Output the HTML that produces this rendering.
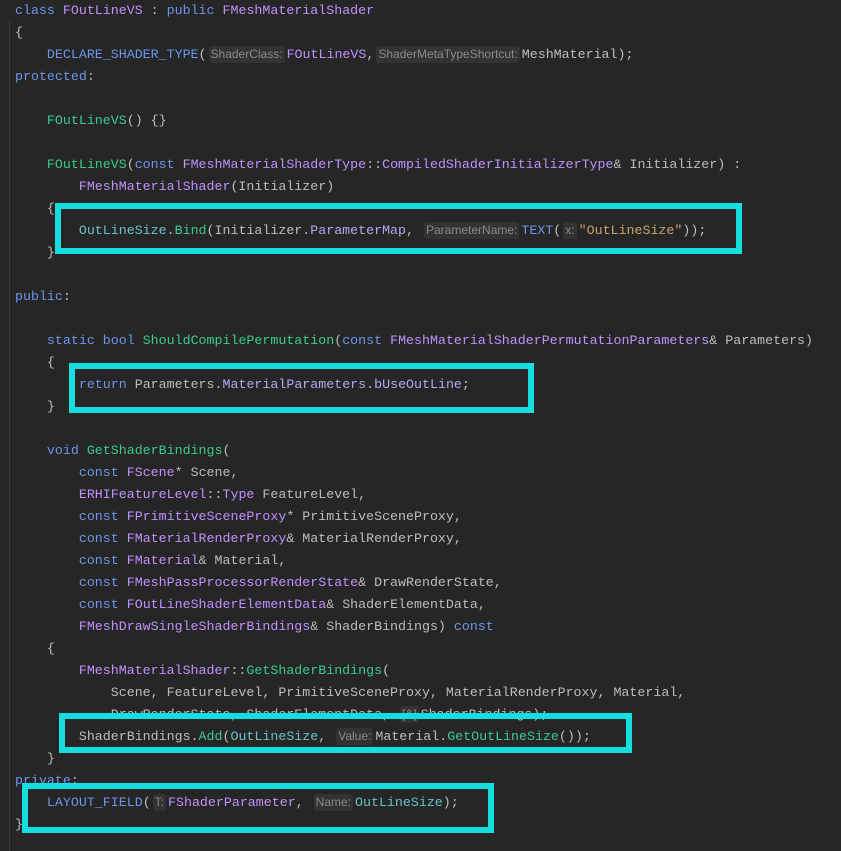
<!DOCTYPE html>
<html><head><meta charset="utf-8"><style>
html,body{margin:0;padding:0;background:#262626;width:841px;height:851px;overflow:hidden}
#code{position:absolute;left:15px;top:0px;font-family:"Liberation Mono",monospace;font-size:13.3px;line-height:22px;white-space:pre;color:#bdbdbd}
.k{color:#6c95eb}.c{color:#c191ff}.f{color:#39cc8f}.m{color:#66c3cc}.s{color:#c9a26d}.p{color:#b9a7f2}
.h{display:inline-block;font-family:"Liberation Sans",sans-serif;font-size:12px;line-height:17px;color:#8a8a8a;background:#333;border-radius:3px;padding:0 2px;margin:0 2px;vertical-align:0px}
.box{position:absolute;border:6px solid #17dede;box-sizing:border-box}
.g{position:absolute;left:9px;top:20px;width:1px;height:831px;background:#3a3a3a}
</style></head><body>
<div class="g"></div>
<div id="code"><span class="k">class</span> <span class="c">FOutLineVS</span> : <span class="k">public</span> <span class="c">FMeshMaterialShader</span>
{
    <span class="k">DECLARE_SHADER_TYPE</span>(<span class="h">ShaderClass:</span><span class="c">FOutLineVS</span>,<span class="h">ShaderMetaTypeShortcut:</span>MeshMaterial);
<span class="k">protected</span>:

    <span class="f">FOutLineVS</span>() {}

    <span class="f">FOutLineVS</span>(<span class="k">const</span> <span class="c">FMeshMaterialShaderType</span>::<span class="c">CompiledShaderInitializerType</span>&amp; Initializer) :
        <span class="c">FMeshMaterialShader</span>(Initializer)
    {
        <span class="m">OutLineSize</span>.<span class="f">Bind</span>(Initializer.<span class="p">ParameterMap</span>, <span class="h">ParameterName:</span><span class="k">TEXT</span>(<span class="h">x:</span><span class="s">"OutLineSize"</span>));
    }

<span class="k">public</span>:

    <span class="k">static</span> <span class="k">bool</span> <span class="f">ShouldCompilePermutation</span>(<span class="k">const</span> <span class="c">FMeshMaterialShaderPermutationParameters</span>&amp; Parameters)
    {
        <span class="k">return</span> Parameters.<span class="p">MaterialParameters</span>.<span class="p">bUseOutLine</span>;
    }

    <span class="k">void</span> <span class="f">GetShaderBindings</span>(
        <span class="k">const</span> <span class="c">FScene</span>* Scene,
        <span class="c">ERHIFeatureLevel</span>::<span class="c">Type</span> FeatureLevel,
        <span class="k">const</span> <span class="c">FPrimitiveSceneProxy</span>* PrimitiveSceneProxy,
        <span class="k">const</span> <span class="c">FMaterialRenderProxy</span>&amp; MaterialRenderProxy,
        <span class="k">const</span> <span class="c">FMaterial</span>&amp; Material,
        <span class="k">const</span> <span class="c">FMeshPassProcessorRenderState</span>&amp; DrawRenderState,
        <span class="k">const</span> <span class="c">FOutLineShaderElementData</span>&amp; ShaderElementData,
        <span class="c">FMeshDrawSingleShaderBindings</span>&amp; ShaderBindings) <span class="k">const</span>
    {
        <span class="c">FMeshMaterialShader</span>::<span class="f">GetShaderBindings</span>(
            Scene, FeatureLevel, PrimitiveSceneProxy, MaterialRenderProxy, Material,
            DrawRenderState, ShaderElementData, <span class="h">[&amp;]</span>ShaderBindings);
        ShaderBindings.<span class="f">Add</span>(<span class="m">OutLineSize</span>, <span class="h">Value:</span>Material.<span class="f">GetOutLineSize</span>());
    }
<span class="k">private</span>:
    <span class="k">LAYOUT_FIELD</span>(<span class="h">T:</span><span class="c">FShaderParameter</span>, <span class="h">Name:</span><span class="m">OutLineSize</span>);
}</div>
<div class="box" style="left:55px;top:203px;width:687px;height:51px"></div>
<div class="box" style="left:69px;top:363px;width:465px;height:50px"></div>
<div class="box" style="left:59px;top:713px;width:573px;height:40px"></div>
<div class="box" style="left:22px;top:783px;width:472px;height:50px"></div>
</body></html>
